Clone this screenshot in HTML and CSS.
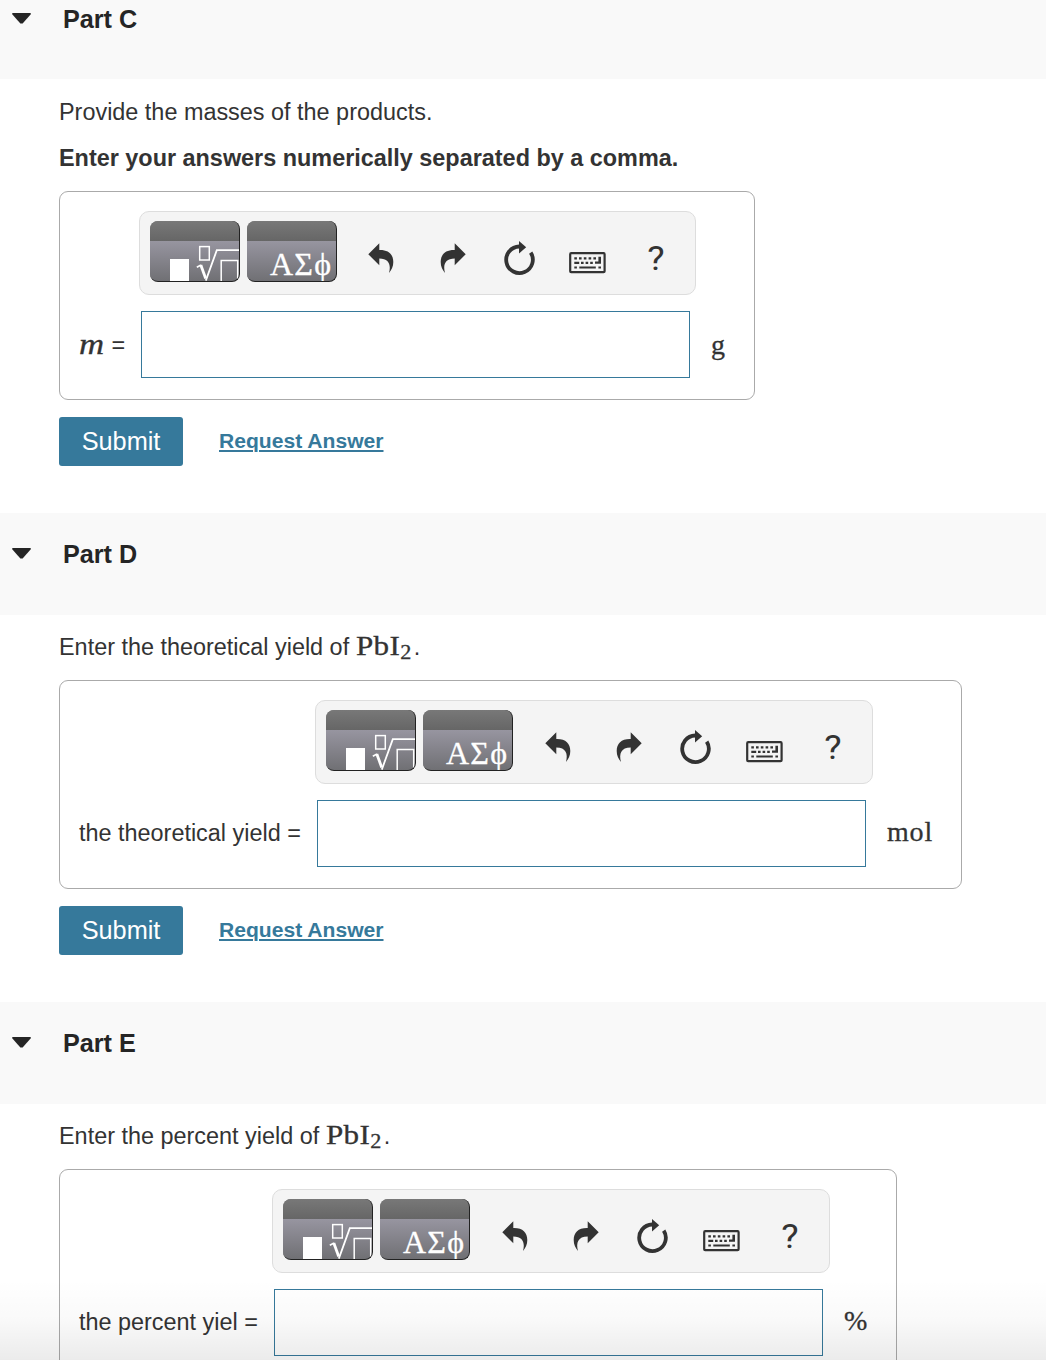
FILE: index.html
```html
<!DOCTYPE html>
<html lang="en">
  <head>
    <meta charset="utf-8" />
    <meta name="viewport" content="width=device-width, initial-scale=1.0" />
    <title>Assignment</title>
    <link rel="stylesheet" href="styles.css">
  </head>
  <body>
    <!-- Toolbar icons -->
    <svg class="icon-defs" width="0" height="0">
      <symbol id="icon-math" viewBox="0 0 89 60">
        <rect x="20" y="38" width="19" height="24" fill="#fff" />
        <g fill="none" stroke="#fff">
          <rect x="49.7" y="25.6" width="9.6" height="13.4" stroke-width="1.5" />
          <path d="M46.8 46.2l4.2-2.2" stroke-width="1.6" />
          <path d="M50.8 44l4.9 13.4" stroke-width="2.8" />
          <path d="M55.8 59.6L66.8 29.2H90" stroke-width="1.8" />
          <path d="M71.2 62V39.4h16.5V62" stroke-width="1.5" />
        </g>
      </symbol>
      <symbol id="icon-undo" viewBox="0 0 26 61">
        <path d="M.3 33.3L11.3 22.2V29C20.5 28.7 25.3 33.2 25.3 41C25.3 45.6 23.6 49 21 51.9C23.2 44 21 37.6 11.3 37.6V44.3Z" />
      </symbol>
      <symbol id="icon-reset" viewBox="0 0 32 61">
        <path d="M27.7 31.6A13.3 13.3 0 1 1 16.2 25.5" fill="none" stroke="#333" stroke-width="3.8" />
        <path d="M16 20L23.2 26.3L16 32.5Z" />
      </symbol>
      <symbol id="icon-keyboard" viewBox="0 0 37 61">
        <rect x="1.2" y="32.2" width="34.4" height="19" rx="1" fill="none" stroke="#333" stroke-width="2.2" />
        <path d="M5.3 36.2h2.6v2.2H5.3zM10 36.2h2.6v2.2H10zM14.8 36.2h2.6v2.2h-2.6zM19.6 36.2h2.6v2.2h-2.6zM24.4 36.2h2.6v2.2h-2.6zM29.4 35.8H32v7h-6v-2.2h3.4z" />
        <path d="M5.3 40.8h4.9V43H5.3zM12 40.8h2.6V43H12zM16.6 40.8h2.6V43h-2.6zM21.2 40.8h2.6V43h-2.6zM5.3 45.4h2.6v2.2H5.3zM10.3 45.4h16.5v2.2H10.3zM29.4 45.4H32v2.2h-2.6z" />
      </symbol>
    </svg>

    <main>
      <section class="part part-first">
        <header class="part-header">
          <span class="arrow"></span>
          <h2>Part C</h2>
        </header>
        <div class="part-body">
          <p>Provide the masses of the products.</p>
          <p><strong>Enter your answers numerically separated by a comma.</strong></p>
          <div class="answer-box answer-mass">
            <label for="mass"><span class="math-var">m</span> =</label>
            <div class="editor">
              <div class="toolbar">
                <button class="btn-math"><svg width="89" height="60"><use href="#icon-math" /></svg></button>
                <button class="btn-math btn-greek">ΑΣϕ</button>
                <svg class="icon undo" width="26" height="61"><use href="#icon-undo" /></svg>
                <svg class="icon redo" width="26" height="61"><use href="#icon-undo" /></svg>
                <svg class="icon reset" width="32" height="61"><use href="#icon-reset" /></svg>
                <svg class="icon keyboard" width="37" height="61"><use href="#icon-keyboard" /></svg>
                <span class="help">?</span>
              </div>
              <input type="text" id="mass" />
            </div>
            <span class="unit">g</span>
          </div>
          <div class="actions">
            <button class="submit">Submit</button>
            <a href="#">Request Answer</a>
          </div>
        </div>
      </section>

      <section class="part">
        <header class="part-header">
          <span class="arrow"></span>
          <h2>Part D</h2>
        </header>
        <div class="part-body">
          <p>Enter the theoretical yield of <span class="math">PbI<sub>2</sub></span>.</p>
          <div class="answer-box answer-theoretical">
            <label for="theoretical">the theoretical yield =</label>
            <div class="editor">
              <div class="toolbar toolbar-wide">
                <button class="btn-math"><svg width="89" height="60"><use href="#icon-math" /></svg></button>
                <button class="btn-math btn-greek">ΑΣϕ</button>
                <svg class="icon undo" width="26" height="61"><use href="#icon-undo" /></svg>
                <svg class="icon redo" width="26" height="61"><use href="#icon-undo" /></svg>
                <svg class="icon reset" width="32" height="61"><use href="#icon-reset" /></svg>
                <svg class="icon keyboard" width="37" height="61"><use href="#icon-keyboard" /></svg>
                <span class="help">?</span>
              </div>
              <input type="text" id="theoretical" />
            </div>
            <span class="unit">mol</span>
          </div>
          <div class="actions">
            <button class="submit">Submit</button>
            <a href="#">Request Answer</a>
          </div>
        </div>
      </section>

      <section class="part">
        <header class="part-header">
          <span class="arrow"></span>
          <h2>Part E</h2>
        </header>
        <div class="part-body">
          <p>Enter the percent yield of <span class="math">PbI<sub>2</sub></span>.</p>
          <div class="answer-box answer-percent">
            <label for="percent">the percent yiel =</label>
            <div class="editor">
              <div class="toolbar toolbar-wide">
                <button class="btn-math"><svg width="89" height="60"><use href="#icon-math" /></svg></button>
                <button class="btn-math btn-greek">ΑΣϕ</button>
                <svg class="icon undo" width="26" height="61"><use href="#icon-undo" /></svg>
                <svg class="icon redo" width="26" height="61"><use href="#icon-undo" /></svg>
                <svg class="icon reset" width="32" height="61"><use href="#icon-reset" /></svg>
                <svg class="icon keyboard" width="37" height="61"><use href="#icon-keyboard" /></svg>
                <span class="help">?</span>
              </div>
              <input type="text" id="percent" />
            </div>
            <span class="unit">%</span>
          </div>
        </div>
      </section>
    </main>
    <div class="bottom-fade"></div>
  </body>
</html>
```

FILE: styles.css
```css
:root {
  --primary: #36799b;
  --text: #333;
  --heading: #252525;
  --surface: #f9f9f9;
  --border: #aaa;
}

* {
  box-sizing: border-box;
  margin: 0;
  padding: 0;
}

body {
  position: relative;
  height: 100vh;
  overflow: hidden;
  background: #fff;
  color: var(--text);
  font-family: "Liberation Sans", Arial, sans-serif;
  font-size: 23.42px;
  line-height: 28px;
}

.icon-defs {
  position: absolute;
}

/* Part Header */
.part-header {
  display: flex;
  align-items: flex-start;
  height: 102px;
  padding: 27px 12px 0;
  background: var(--surface);
}

.part-header h2 {
  margin-left: 32px;
  color: var(--heading);
  font-size: 25.2px;
  font-weight: bold;
  line-height: 29px;
}

.arrow {
  width: 19px;
  height: 11px;
  margin-top: 8px;
  background: var(--heading);
  clip-path: polygon(3% 0, 97% 0, 100% 10%, 56% 96%, 44% 96%, 0 10%);
}

/* Part Body */
.part-body {
  padding: 18px 59px 47px;
}

.part-body p {
  height: 28px;
  margin-bottom: 19px;
  line-height: 26px;
  white-space: nowrap;
}

/* The page is scrolled, so the top of the first header is cut off */
.part-first .part-header {
  height: 79px;
  padding-top: 5px;
}

.part-first .part-body {
  padding-top: 20px;
}

.part-first p {
  margin-bottom: 18px;
}

.math,
.unit {
  font-family: "Liberation Serif", serif;
  font-size: 28px;
  -webkit-text-stroke: 0.3px var(--text);
}

.math {
  display: inline-block;
  width: 58px;
  height: 26px;
  letter-spacing: 0.3px;
  transform: scaleX(1.11);
  transform-origin: left;
}

.math sub {
  font-size: 20px;
  line-height: 0;
  vertical-align: -4px;
}

.math-var {
  display: inline-block;
  width: 26px;
  font-family: "Liberation Serif", serif;
  font-size: 29px;
  font-style: italic;
  transform: translateY(1px) scaleX(1.2);
  transform-origin: left;
  -webkit-text-stroke: 0.3px var(--text);
}

/* Answer Box */
.answer-box {
  display: flex;
  height: 209px;
  padding: 19px;
  border: 1px solid var(--border);
  border-radius: 9px;
}

.answer-mass {
  width: 696px;
}

.answer-theoretical {
  width: 903px;
}

.answer-percent {
  width: 838px;
}

.answer-box label {
  flex: 1;
  padding-top: 119px;
  white-space: nowrap;
}

.answer-mass label {
  padding-top: 118px;
}

.editor {
  width: 557px;
}

.editor input {
  display: block;
  width: 549px;
  height: 67px;
  margin: 16px 0 0 2px;
  background: transparent;
  border: 1px solid var(--primary);
  border-radius: 0;
}

.unit {
  padding: 118px 9px 0 15px;
  letter-spacing: 0.8px;
}

.answer-mass .unit {
  width: 39px;
  padding-top: 120px;
}

.answer-theoretical .unit {
  width: 70px;
}

.answer-percent .unit {
  width: 48px;
}

/* Toolbar */
.toolbar {
  display: flex;
  height: 84px;
  padding: 9px 10px;
  background: #f4f4f4;
  border: 1px solid #ddd;
  border-radius: 10px;
}

.toolbar-wide {
  width: 558px;
}

.btn-math {
  width: 90px;
  height: 61px;
  margin-right: 7px;
  overflow: hidden;
  border: solid #222;
  border-width: 0 1px 1px 0;
  border-radius: 8px;
  background: linear-gradient(#787878, #666) 0 0 / 100% 20px no-repeat,
    linear-gradient(#777 20px, #9795a0 20px, #707074);
  color: #fff;
}

.btn-math svg {
  display: block;
}

.btn-greek {
  margin-right: 0;
  padding: 26px 0 0 23px;
  font-family: "Liberation Serif", "DejaVu Serif", serif;
  font-size: 32px;
  line-height: 34px;
  letter-spacing: 1.2px;
  text-align: left;
  -webkit-text-stroke: 0.3px #fff;
}

.icon {
  fill: var(--text);
}

.undo {
  margin-left: 31px;
}

.redo {
  margin-left: 46px;
  transform: scaleX(-1);
}

.reset {
  margin-left: 37px;
}

.keyboard {
  margin-left: 34px;
}

.toolbar-wide .undo {
  margin-left: 32px;
}

.toolbar-wide .redo {
  margin-left: 45px;
}

.toolbar-wide .keyboard {
  margin-left: 35px;
}

.help {
  margin: 18px 0 0 42px;
  font-family: Roboto, sans-serif;
  font-size: 34px;
  line-height: 38px;
  transform: scaleX(1.08);
}

/* Actions */
.actions {
  display: flex;
  align-items: center;
  gap: 36px;
  margin-top: 17px;
}

.submit {
  width: 124px;
  height: 49px;
  background: var(--primary);
  border: none;
  border-radius: 3px;
  color: #fff;
  font-family: inherit;
  font-size: 25.3px;
}

.actions a {
  padding-bottom: 2px;
  color: var(--primary);
  font-size: 21.1px;
  font-weight: bold;
  text-decoration-thickness: 2px;
  text-underline-offset: 2px;
}

.bottom-fade {
  position: absolute;
  left: 0;
  right: 0;
  bottom: 0;
  height: 80px;
  background: linear-gradient(transparent, rgba(0, 0, 0, 0.025) 50%, rgba(0, 0, 0, 0.08));
  pointer-events: none;
}
```
